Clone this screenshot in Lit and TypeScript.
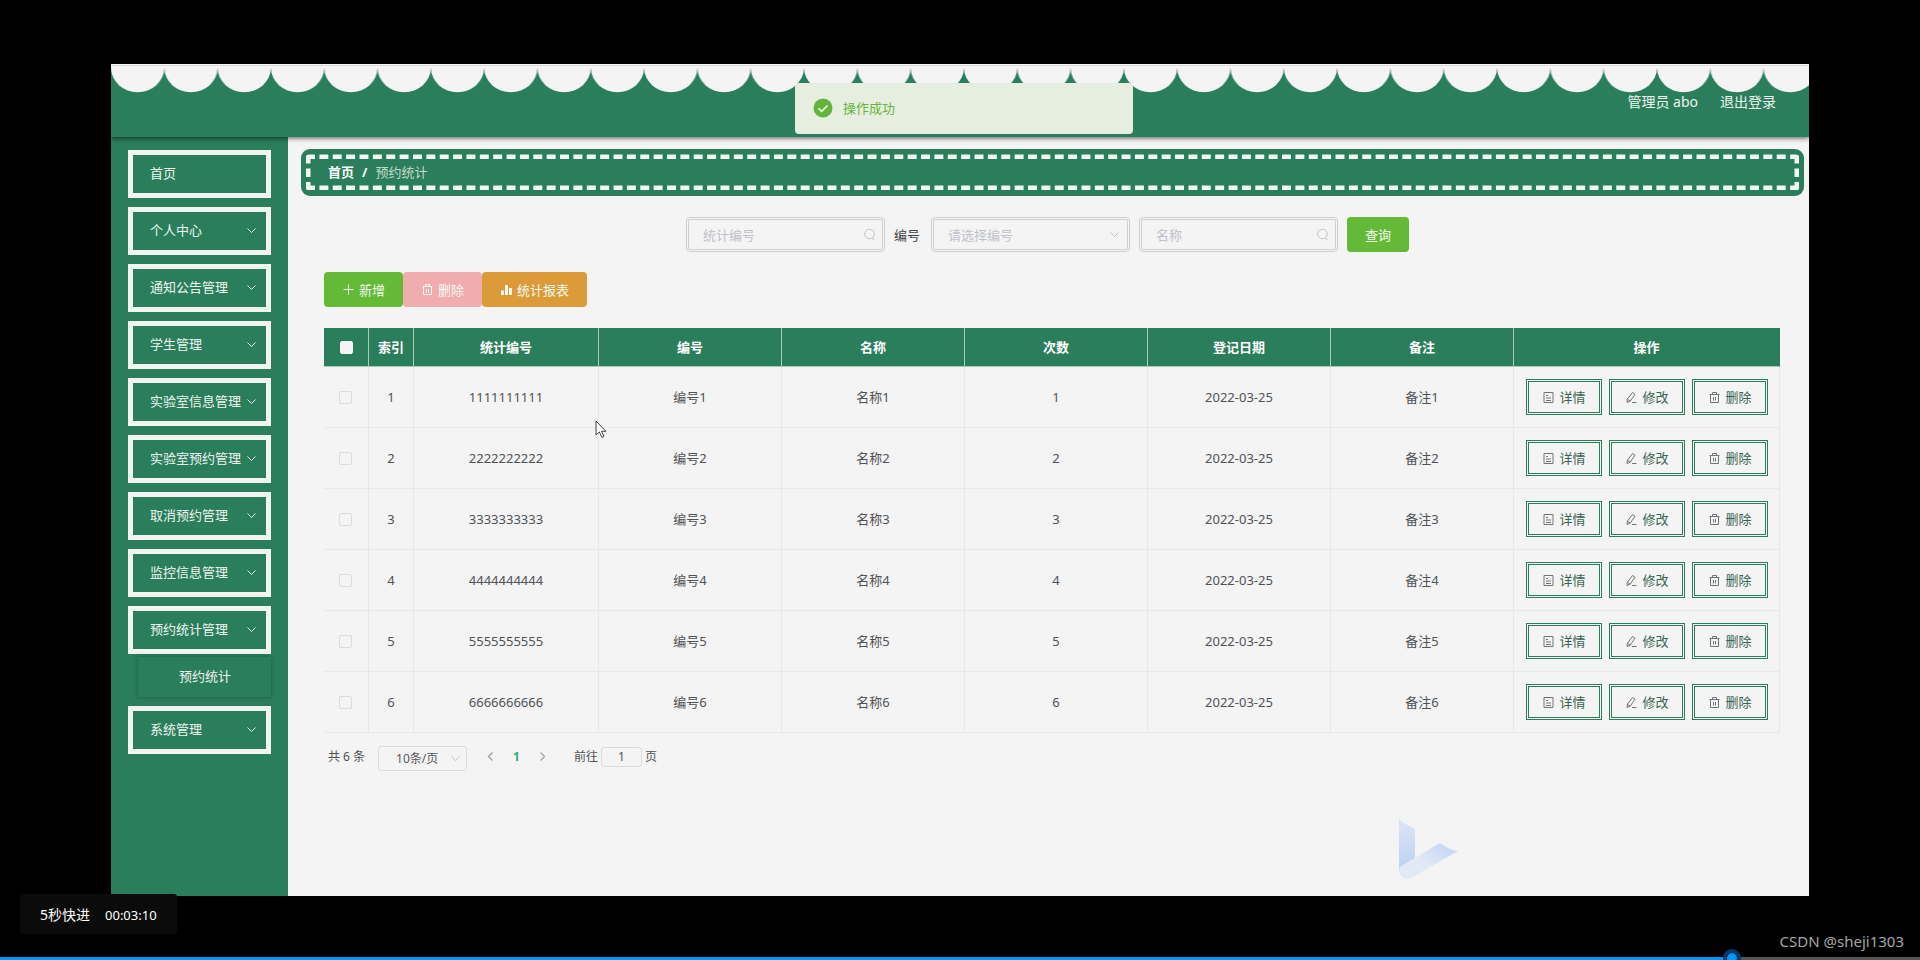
import { LitElement, html, css, svg } from "lit";
import { customElement, state } from "lit/decorators.js";

const ICONS: Record<string, unknown> = {
  chevron: svg`<path d="M2.500 4.500l4 4 4-4" />`,
  left: svg`<path d="M8.500 2.500L4.500 6.500l4 4" stroke-width="1.500" />`,
  right: svg`<path d="M4.500 2.500l4 4-4 4" stroke-width="1.500" />`,
  plus: svg`<path d="M6.500 1.500v10M1.500 6.500h10" />`,
  trash: svg`<path d="M1.500 3.500h10M4.500 3.500v-2h4v2M2.500 3.500v8h8v-8M5.500 6v3.500M7.500 6v3.500" />`,
  search: svg`<circle cx="6.500" cy="6" r="4.800" /><path d="M9 10.500l2.500 1" />`,
  doc: svg`<path d="M2 1.500h9v10H2zM4 4.500h2M4 7h5M4 9.500h5" />`,
  edit: svg`<path d="M7.500 1.500l2.500 1.700-4.800 7-3.200 1.300.4-3.300zM7 11.500h4.500M2.400 8.200l2.800 2" />`,
  chart: svg`<path d="M2.500 12V7.500M6.500 12V2M10.500 12V5" stroke-width="3" />`,
};

const icon = (name: string) => html`<svg class="icon" viewBox="0 0 13 13" aria-hidden="true">${ICONS[name]}</svg>`;

interface Row { id: number; code: string; date: string; }

@customElement("app-root")
export class AppRoot extends LitElement {
  @state() private menu = ["首页", "个人中心", "通知公告管理", "学生管理", "实验室信息管理", "实验室预约管理", "取消预约管理", "监控信息管理", "预约统计管理", "系统管理"];
  @state() private rows: Row[] = [1, 2, 3, 4, 5, 6].map((n) => ({ id: n, code: String(n).repeat(10), date: "2022-03-25" }));
  @state() private progress = 90.2;

  static styles = css`
    :host {
      display: block;
      position: relative;
      box-sizing: border-box;
      min-height: 100vh;
      padding: 64px 111px;
      background: #000;
      overflow: hidden;
      font: 13px/20px "Noto Sans", "Noto Sans CJK SC", sans-serif;
      color: #505256;
      --green: #2b7e5b;
      --paper: #f4f4f4;
    }
    * { box-sizing: border-box; }
    button, input, select { font: inherit; color: inherit; margin: 0; }
    button { cursor: pointer; }
    a { color: inherit; text-decoration: none; }
    .icon { width: 13px; height: 13px; flex: none; fill: none; stroke: currentColor; stroke-width: 1; }

    .app { display: flex; flex-direction: column; min-height: calc(100vh - 128px); background: var(--paper); position: relative; }
    .top {
      position: relative; z-index: 1;
      display: flex; justify-content: flex-end; align-items: center; gap: 22px;
      height: 73px; padding: 2px 33px 0 0;
      background: var(--green); color: #eef5f0; font-size: 14px;
      box-shadow: 0 1px 5px rgba(0, 0, 0, .65);
    }
    .awning { position: absolute; left: 0; top: 0; width: 100%; height: 30px; }
    .top span, .top a { position: relative; }

    .body { display: flex; flex: 1; }
    .side { flex: none; width: 177px; padding: 13px 17px; background: var(--green); color: #eef5f0; }
    .menu { list-style: none; margin: 0; padding: 0; display: flex; flex-direction: column; gap: 9px; }
    .item {
      display: flex; justify-content: space-between; align-items: center;
      width: 100%; height: 48px; padding: 0 8px 2px 17px;
      border: 5px solid #f1f4f1; background: none; text-align: left; white-space: nowrap;
    }
    .sub {
      display: block; margin: 3px 0 0 10px; padding: 9px 0 11px 41px; height: 40px;
      box-shadow: 0 0 4px rgba(0, 40, 20, .4);
    }

    .main { flex: 1; min-width: 0; padding: 12px 5px 0 13px; }
    .crumbs {
      position: relative; display: flex; align-items: center; gap: 8px;
      height: 47px; padding: 0 27px 1px; border-radius: 9px;
      background: var(--green); color: #c3dbcd;
    }
    .crumbs b { color: #fff; }
    .stitch { position: absolute; left: 5px; top: 5px; width: calc(100% - 10px); height: 37px; fill: none; stroke: #f1f6f2; stroke-width: 4.5; border-radius: 4px; }
    .panel { padding: 21px 24px 0 23px; }

    .search { display: flex; justify-content: center; align-items: center; gap: 9px; padding-right: 9px; }
    .field { position: relative; display: flex; align-items: center; color: #c0c3ca; }
    .field .icon { position: absolute; right: 9px; pointer-events: none; }
    .field input, .field select {
      width: 199px; height: 35px; padding: 0 26px 0 14px; outline: 0;
      border: 3px double #cfcfd4; border-radius: 4px; background: transparent; appearance: none;
    }
    .field input::placeholder { color: #bfc1c8; opacity: 1; }
    .label { color: #3f4246; padding-right: 2px; }
    .btn {
      display: inline-flex; align-items: center; justify-content: center; gap: 4px;
      height: 35px; padding: 0 18px; border: 0; border-radius: 4px; color: #f5faf2; white-space: nowrap;
    }
    .ok { background: #64b937; }
    .del { background: #f1acaf; }
    .warn { background: #db9b38; }
    .actions { display: flex; padding: 20px 0 21px; }

    table { width: 100%; table-layout: fixed; border-collapse: separate; border-spacing: 0; text-align: center; }
    th, td { padding: 0; border: 0 solid #e6e8ee; border-width: 0 1px 1px 0; }
    th { height: 39px; background: var(--green); color: #fff; font-weight: 700; border-color: #a9cbb9; }
    th:last-child { border-right-color: var(--green); }
    td { height: 61px; }
    .c-check { width: 45px; }
    .c-index { width: 45px; }
    .c-code { width: 185px; }
    .c-ops { width: 266px; }
    .check { appearance: none; display: block; width: 13px; height: 13px; margin: 0 auto; border: 1px solid #dadce2; border-radius: 2px; }
    td .check { margin-left: 15px; }
    th .check { background: #f4f4f4; border-color: #f4f4f4; }
    .ops { display: flex; justify-content: center; gap: 7px; padding-left: 1px; }
    .op {
      display: inline-flex; align-items: center; justify-content: center; gap: 4px;
      width: 76px; height: 36px; padding: 0; border: 3px double var(--green); background: none; color: #386553;
    }
    .op .icon { stroke: #6f7673; }

    .pager { display: flex; align-items: center; padding: 10px 4px 0; font-size: 12px; height: 37px; }
    .size { position: relative; display: flex; align-items: center; margin: 4px 0 0 13px; color: #c0c3ca; }
    .size select { width: 89px; height: 25px; padding: 0 17px; border: 1px solid #d9dbe1; border-radius: 3px; background: none; appearance: none; color: #56585c; }
    .size .icon { position: absolute; right: 5px; pointer-events: none; }
    .pages { display: flex; align-items: center; gap: 14px; margin: 0 25px 0 17px; color: #a9abb0; }
    .pages button { display: flex; padding: 0; border: 0; background: none; }
    .pages .current { padding: 0 2px; color: #2aae80; font-weight: 700; }
    .jump { display: flex; align-items: center; gap: 3px; }
    .jump input { width: 41px; height: 20px; padding: 0; text-align: center; border: 1px solid #d9dbe1; border-radius: 3px; background: none; }

    .toast {
      position: absolute; z-index: 2; left: calc(50% + 4px); top: 19px; transform: translateX(-50%);
      display: flex; align-items: center; gap: 10px; width: 338px; height: 51px; padding: 0 18px 2px;
      border-radius: 4px; background: #e6eee0; color: #67b43f;
    }
    .toast svg { width: 20px; height: 20px; }
    .mark { position: absolute; left: 1287px; top: 750px; width: 66px; height: 70px; }
    .cursor { position: absolute; left: 484px; top: 356px; width: 13px; height: 19px; }

    .tip {
      position: absolute; left: 20px; bottom: 26px; display: flex; align-items: center; gap: 15px;
      height: 40px; padding: 2px 20px 0; border-radius: 3px; background: #0b0b0b; color: #fff;
    }
    .action { font-size: 14px; }
    .credit { position: absolute; right: 16px; bottom: 9px; color: #a6a6a6; font-size: 15px; }
    .track { position: absolute; left: 0; right: 0; bottom: 0; height: 3px; background: #565656; }
    .played { position: relative; height: 3px; background: #0095ff; }
    .knob { position: absolute; right: -9px; top: -8px; width: 18px; height: 18px; border-radius: 50%; border: 4px solid #013a66; background: #0095ff; background-clip: padding-box; }
  `;

  private renderItem(name: string, i: number) {
    return html`<li>
      <button class="item">${name}${i ? icon("chevron") : ""}</button>
      ${name === "预约统计管理" ? html`<a class="sub" href="#">预约统计</a>` : ""}
    </li>`;
  }

  private renderRow(r: Row) {
    return html`<tr>
      <td><input class="check" type="checkbox" aria-label="选择 ${r.id}" /></td>
      <td>${r.id}</td><td>${r.code}</td><td>编号${r.id}</td><td>名称${r.id}</td><td>${r.id}</td><td>${r.date}</td><td>备注${r.id}</td>
      <td><div class="ops">
        <button class="op">${icon("doc")}详情</button>
        <button class="op">${icon("edit")}修改</button>
        <button class="op">${icon("trash")}删除</button>
      </div></td>
    </tr>`;
  }

  render() {
    return html`
      <div class="app">
        <header class="top">
          <svg class="awning" aria-hidden="true">
            <defs><pattern id="scallop" width="53.31" height="30" patternUnits="userSpaceOnUse">
              <path d="M0 0H53.31V4A26.660 24.700 0 0 1 0 4Z" fill="#f4f4f4" />
            </pattern></defs>
            <rect width="100%" height="30" fill="url(#scallop)" />
            <rect y="1" width="100%" height="1" fill="#dcdedc" />
          </svg>
          <span>管理员 abo</span><a href="#">退出登录</a>
        </header>
        <div class="body">
          <nav class="side"><ul class="menu">${this.menu.map((m, i) => this.renderItem(m, i))}</ul></nav>
          <main class="main">
            <div class="crumbs">
              <svg class="stitch" aria-hidden="true">
                <line x1="0" x2="100%" y1="2.750" y2="2.750" pathLength="1493" stroke-dasharray="9 4.370" />
                <line x1="0" x2="100%" y1="33.750" y2="33.750" pathLength="1493" stroke-dasharray="9 4.370" />
                <line x1="2.250" x2="2.250" y1="1" y2="36" stroke-dasharray="8.500 5" />
                <svg x="100%" overflow="visible"><line x1="-2.250" x2="-2.250" y1="1" y2="36" stroke-dasharray="8.500 5" /></svg>
              </svg>
              <b>首页</b><b>/</b><span>预约统计</span>
            </div>
            <div class="panel">
              <form class="search">
                <div class="field"><input placeholder="统计编号" aria-label="统计编号" />${icon("search")}</div>
                <label class="label" for="no">编号</label>
                <div class="field"><select id="no"><option>请选择编号</option></select>${icon("chevron")}</div>
                <div class="field"><input placeholder="名称" aria-label="名称" />${icon("search")}</div>
                <button class="btn ok" type="button">查询</button>
              </form>
              <div class="actions">
                <button class="btn ok">${icon("plus")}新增</button>
                <button class="btn del">${icon("trash")}删除</button>
                <button class="btn warn">${icon("chart")}统计报表</button>
              </div>
              <table>
                <thead><tr>
                  <th class="c-check"><input class="check" type="checkbox" aria-label="全选" /></th>
                  <th class="c-index">索引</th><th class="c-code">统计编号</th><th>编号</th><th>名称</th><th>次数</th><th>登记日期</th><th>备注</th><th class="c-ops">操作</th>
                </tr></thead>
                <tbody>${this.rows.map((r) => this.renderRow(r))}</tbody>
              </table>
              <div class="pager">
                <span>共 6 条</span>
                <div class="size"><select aria-label="每页条数"><option>10条/页</option></select>${icon("chevron")}</div>
                <div class="pages">
                  <button aria-label="上一页">${icon("left")}</button>
                  <button class="current">1</button>
                  <button aria-label="下一页">${icon("right")}</button>
                </div>
                <label class="jump">前往<input value="1" />页</label>
              </div>
            </div>
          </main>
        </div>
        <div class="toast" role="status">
          <svg viewBox="0 0 20 20" aria-hidden="true"><circle cx="10" cy="10" r="9.500" fill="#62b53a" /><path d="M5.500 10.300l3.200 3 5.800-5.800" fill="none" stroke="#eef5ea" stroke-width="1.600" /></svg>
          操作成功
        </div>
        <svg class="mark" viewBox="0 0 66 70" aria-hidden="true">
          <defs>
            <linearGradient id="m1" x1="0" y1="0" x2="0" y2="1"><stop offset="0" stop-color="#dde5f4" /><stop offset="1" stop-color="#b9d1f4" /></linearGradient>
            <linearGradient id="m2" x1="0" y1="1" x2="1" y2="0"><stop offset="0" stop-color="#e3eaf6" /><stop offset=".45" stop-color="#e1e8f6" /><stop offset="1" stop-color="#bdd2f5" /></linearGradient>
          </defs>
          <path d="M1 5V3a8 8 0 0 1 16 0v12zM42 30l11-7a7.500 7.500 0 0 1 6 15z" fill="#f2f3f5" />
          <path d="M1 5Q3 8 17 15v40L1 58z" fill="url(#m1)" />
          <path d="M5 51L42 29Q53 37 60 37L13 64Q8 66 4 63 1 60 1 57 1 53 5 51z" fill="url(#m2)" />
        </svg>
        <svg class="cursor" viewBox="0 0 13 19" aria-hidden="true"><path d="M1 1v14l3.300-3 2.700 5.500 2-1-2.500-5.200h4.500z" fill="#fafafa" stroke="#444" /></svg>
      </div>
      <div class="tip"><span class="action">5秒快进</span><span>00:03:10</span></div>
      <div class="credit">CSDN @sheji1303</div>
      <div class="track"><div class="played" style="width:${this.progress}%"><i class="knob"></i></div></div>
    `;
  }
}
